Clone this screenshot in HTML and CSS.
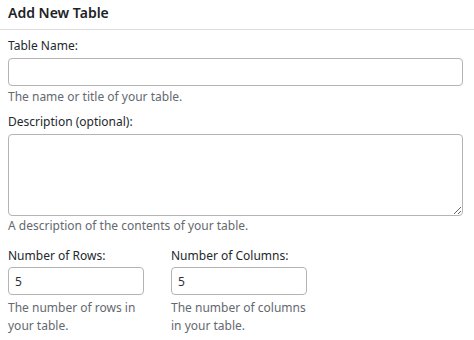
FILE: index.html
```html
<!DOCTYPE html>
<html lang="en">
<head>
    <meta charset="UTF-8">
    <meta name="viewport" content="width=device-width, initial-scale=1.0">
    <title>Add New Table</title>
    <link rel="stylesheet" href="styles.css">
</head>

<body>
    <h2 class="panel-title">Add New Table</h2>

    <form class="table-form">
        <div class="field">
            <label for="tableName">Table Name:</label>
            <input id="tableName" class="wide-input" type="text">
            <p class="hint hint-name">The name or title of your table.</p>
        </div>

        <div class="field">
            <label for="tableDescription">Description (optional):</label>
            <textarea id="tableDescription" class="wide-input"></textarea>
            <p class="hint hint-desc">A description of the contents of your table.</p>
        </div>

        <!-- Righe e colonne affiancate -->
        <div class="size-row">
            <div class="field small-field">
                <label for="tableRows">Number of Rows:</label>
                <input id="tableRows" class="small-input" type="text" value="5">
                <p class="hint">The number of rows in your table.</p>
            </div>
            <div class="field small-field">
                <label for="tableColumns">Number of Columns:</label>
                <input id="tableColumns" class="small-input" type="text" value="5">
                <p class="hint">The number of columns in your table.</p>
            </div>
        </div>
    </form>
</body>
</html>
```

FILE: styles.css
```css
body {
    font-family: 'Noto Sans', 'Open Sans', sans-serif;
    font-size: 12px;
    line-height: 18px;
    color: #23282d;
    background-color: #fff;
    margin: 0;
    padding: 0;
}

.panel-title {
    font-size: 14px;
    font-weight: 600;
    line-height: 20px;
    color: #1d2327;
    margin: 0;
    padding: 3px 8px 6px;
    border-bottom: 1px solid #dcdcde;
}

.table-form {
    padding: 7px 8px 0;
}

.field label {
    display: block;
    margin-bottom: 3px;
}

.field .wide-input {
    display: block;
    box-sizing: border-box;
    width: 455px;
    height: 28px;
    margin: 0;
    padding: 0 6px;
    font-family: inherit;
    font-size: 12px;
    color: #2c3338;
    border: 1px solid #b4b4b4;
    border-radius: 4px;
    outline: none;
}

.field textarea.wide-input {
    height: 82px;
    padding: 4px 6px;
}

.hint {
    margin: 2px 0 0;
    color: #646970;
}

.hint-name {
    margin-bottom: 7px;
}

.hint-desc {
    margin: 1px 0 12px;
}

.size-row {
    display: flex;
    gap: 27px;
}

.small-field {
    width: 136px;
}

.small-field label {
    margin-bottom: 2px;
}

.small-input {
    display: block;
    box-sizing: border-box;
    width: 136px;
    height: 28px;
    margin: 0;
    padding: 0 6px;
    font-family: inherit;
    font-size: 12px;
    color: #2c3338;
    border: 1px solid #b4b4b4;
    border-radius: 4px;
    outline: none;
}

.small-field .hint {
    margin-top: 4px;
    line-height: 18px;
}
```
